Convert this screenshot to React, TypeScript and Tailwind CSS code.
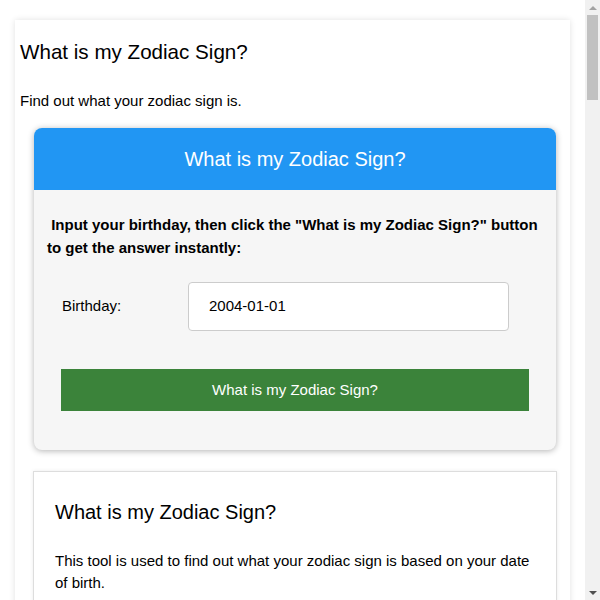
import React from "react";

function Scrollbar() {
  return (
    <div className="flex h-[600px] w-[15px] shrink-0 flex-col items-center bg-[#f1f1f1]">
      <div className="flex h-[15px] w-full items-center justify-center">
        <div className="h-0 w-0 border-x-[4px] border-b-[4px] border-x-transparent border-b-[#a3a3a3]" />
      </div>
      <div className="h-[85px] w-[11px] bg-[#c1c1c1]" />
      <div className="flex-1" />
      <div className="flex h-[15px] w-full items-center justify-center">
        <div className="h-0 w-0 border-x-[4px] border-t-[4px] border-x-transparent border-t-[#505050]" />
      </div>
    </div>
  );
}

export default function App() {
  return (
    <div className="flex h-[600px] w-[600px] overflow-hidden bg-white text-black" style={{ fontFamily: '"Liberation Sans", Arial, sans-serif' }}>
      <div className="flex-1 overflow-hidden px-[15px] pt-[20px]">
        <div className="min-h-[700px] bg-white px-[5px] pt-[19px] pb-[40px] shadow-[0_0_6px_rgba(0,0,0,0.12)]">
          <h1 className="text-[20.6px] leading-[25px] font-normal">What is my Zodiac Sign?</h1>
          <p className="mt-[27px] text-[15px] leading-[19px]">Find out what your zodiac sign is.</p>

          <div className="ml-[14px] mt-[18px] w-[522px] overflow-hidden rounded-[8px] bg-[#f6f6f6] shadow-[0_1px_6px_rgba(0,0,0,0.3)]">
            <div className="flex h-[62px] items-center justify-center bg-[#2196f3] text-[20px] text-white">
              What is my Zodiac Sign?
            </div>
            <div className="px-[13px] pt-[23px] pb-[39px]">
              <p className="text-[15px] font-bold leading-[23px]">
                &nbsp;Input your birthday, then click the "What is my Zodiac Sign?" button to get the answer instantly:
              </p>
              <div className="mt-[23px] flex items-center pl-[15px]">
                <span className="w-[126px] text-[15px]">Birthday:</span>
                <div className="flex h-[49px] w-[321px] items-center rounded-[4px] border border-[#cccccc] bg-white pl-[20px] text-[15px]">
                  2004-01-01
                </div>
              </div>
              <button className="ml-[14px] mt-[38px] flex h-[42px] w-[468px] items-center justify-center bg-[#3b833a] text-[15px] text-white">
                What is my Zodiac Sign?
              </button>
            </div>
          </div>

          <div className="ml-[13px] mt-[21px] w-[524px] border border-[#dddddd] bg-white px-[21px] pt-[28px] pb-[30px] shadow-[0_0_4px_rgba(0,0,0,0.08)]">
            <h2 className="text-[20px] leading-[24px] font-normal">What is my Zodiac Sign?</h2>
            <p className="mt-[26px] text-[15px] leading-[22px]">
              This tool is used to find out what your zodiac sign is based on your date of birth.
            </p>
          </div>
        </div>
      </div>
      <Scrollbar />
    </div>
  );
}
